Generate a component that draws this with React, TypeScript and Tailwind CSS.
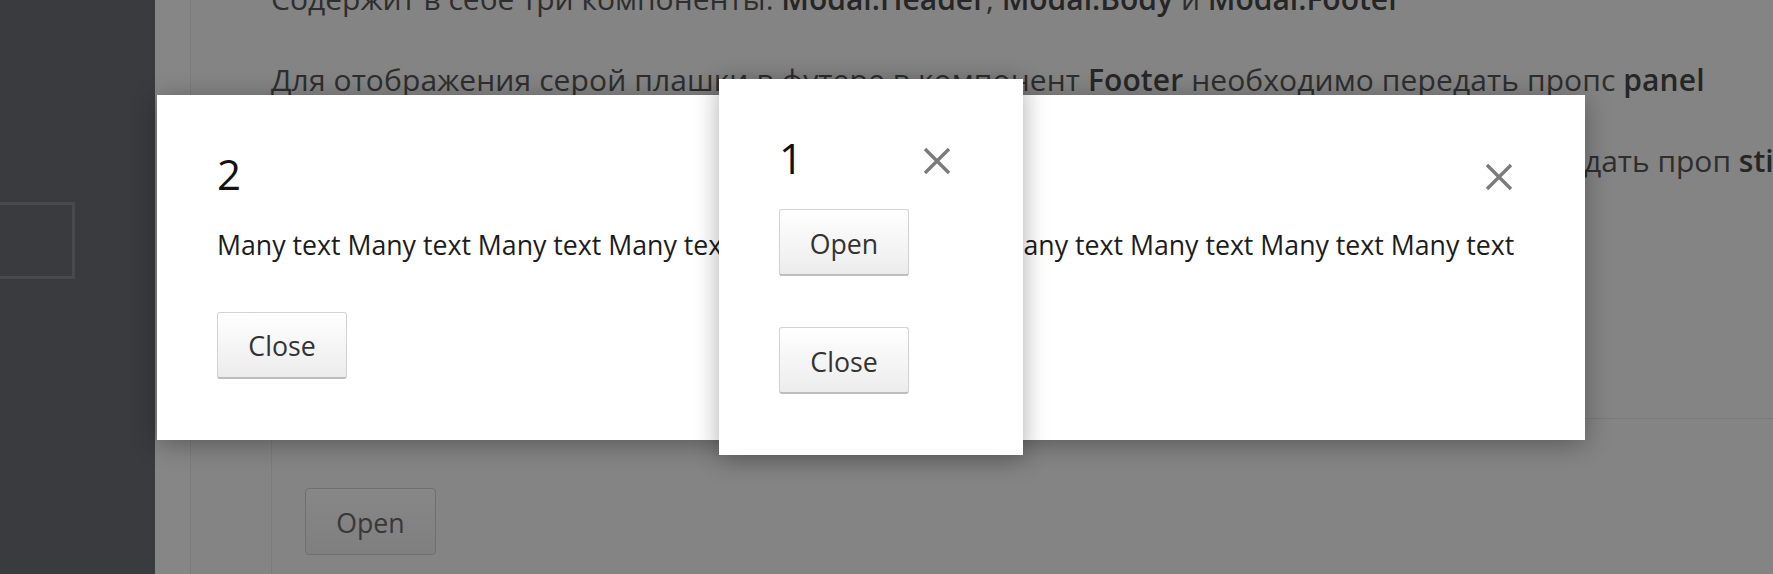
import React from "react";

function CloseIcon() {
  return (
    <svg width="28" height="28" viewBox="0 0 28 28" fill="none" xmlns="http://www.w3.org/2000/svg">
      <path d="M2 2L26 26M26 2L2 26" stroke="#7b7b7b" strokeWidth="3.4" />
    </svg>
  );
}

function Button({ children }: { children: React.ReactNode }) {
  return (
    <button className="flex items-center justify-center w-[130px] h-[67px] pt-[4px] rounded-[3px] border border-[#d2d2d2] border-b-2 border-b-[#bdbdbd] bg-gradient-to-b from-white to-[#ececec] text-[26.7px] text-[#333]">
      {children}
    </button>
  );
}

function Modal({
  title,
  className,
  children,
  footerGap,
}: {
  title: string;
  className: string;
  children: React.ReactNode;
  footerGap: string;
}) {
  return (
    <div className={`absolute bg-white px-[60px] pt-[58px] pb-[61px] shadow-[0_4px_24px_rgba(0,0,0,0.32)] ${className}`}>
      {/* Header */}
      <div className="flex items-start justify-between">
        <h2 className="text-[42px] leading-none text-[#111]">{title}</h2>
        <button aria-label="Закрыть" className="mt-[10px] mr-[12px]">
          <CloseIcon />
        </button>
      </div>
      {/* Body */}
      <div className="mt-[30px]">{children}</div>
      {/* Footer */}
      <div className={footerGap}>
        <Button>Close</Button>
      </div>
    </div>
  );
}

export default function App() {
  const manyText = Array(10).fill("Many text").join(" ");

  return (
    <div className="relative flex h-[574px] w-[1773px] overflow-hidden bg-[#848484] font-['Open_Sans','Noto_Sans',sans-serif]">
      {/* Sidebar */}
      <aside className="w-[155px] shrink-0 bg-[#3a3b3f]">
        <div className="mt-[202px] -ml-[3px] h-[77px] w-[78px] border-[3px] border-[#48494d]" />
      </aside>

      {/* Page content under the overlay */}
      <main className="flex flex-1">
        <div className="w-[36px] shrink-0 border-r border-[#7c7c7c] bg-[#868686]" />
        <div className="flex-1 pl-[80px] text-[30px] leading-[40.5px] text-[#2e2e2e] whitespace-nowrap">
          <p className="-mt-[21px] mb-[40.5px]">
            Содержит в себе три компоненты: <b className="font-semibold text-[#262626]">Modal.Header</b>,{" "}
            <b className="font-semibold text-[#262626]">Modal.Body</b> и{" "}
            <b className="font-semibold text-[#262626]">Modal.Footer</b>
          </p>
          <p className="mb-[40.5px] tracking-[0.1px]">
            Для отображения серой плашки в футере в компонент{" "}
            <b className="font-semibold text-[#262626]">Footer</b> необходимо передать пропс{" "}
            <b className="font-semibold text-[#262626]">panel</b>
          </p>
          <p>
            Для прикрепления футера внизу модального окна, в компонент{" "}
            <b className="font-semibold text-[#262626]">Footer</b> необходимо передать проп{" "}
            <b className="font-semibold text-[#262626]">sticky</b>
          </p>
          <div className="mt-[236px] h-[200px] border-t border-l border-[#7a7a7a] pl-[33px] pt-[69px]">
            <button className="flex items-center justify-center w-[131px] h-[67px] pt-[4px] rounded-[4px] border border-[#6f6f6f] bg-gradient-to-b from-[#878787] to-[#7f7f7f] text-[26.7px] leading-[40px] text-[#383838]">
              Open
            </button>
          </div>
        </div>
      </main>

      {/* Modal 2 */}
      <Modal title="2" className="left-[157px] top-[95px] w-[1428px] h-[345px]" footerGap="mt-[46px]">
        <p className="text-[26.7px] leading-[40.5px] text-[#1c1c1c] whitespace-nowrap">{manyText}</p>
      </Modal>

      {/* Modal 1 */}
      <Modal title="1" className="left-[719px] top-[79px] w-[304px] h-[376px]" footerGap="mt-[51px]">
        <Button>Open</Button>
      </Modal>
    </div>
  );
}
